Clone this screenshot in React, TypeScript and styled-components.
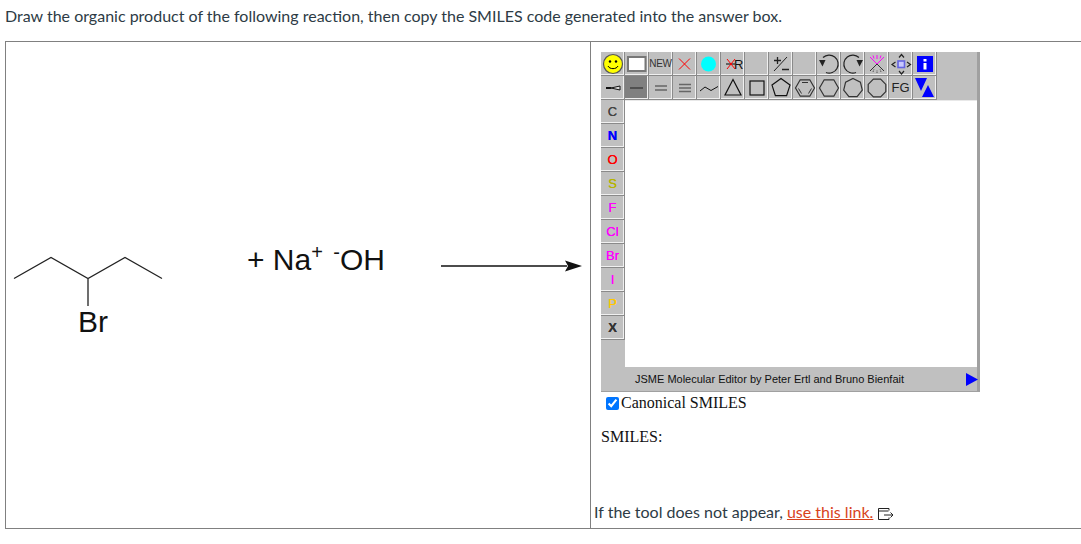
import { ReactNode } from 'react';
import styled, { createGlobalStyle } from 'styled-components';

const GlobalStyle = createGlobalStyle`
  html, body {
    margin: 0;
    padding: 0;
    background: #fff;
    overflow: hidden;
  }
  body {
    width: 1081px;
    height: 544px;
    font-family: Lato, "Liberation Sans", sans-serif;
  }
`;

const Page = styled.div`
  padding: 6px 0 0 5px;
`;

const Prompt = styled.p`
  margin: 0;
  height: 35px;
  font-size: 16px;
  line-height: 20px;
  color: #2d3b45;
`;

const QuestionTable = styled.div`
  display: grid;
  grid-template-columns: 585px 1fr;
  height: 486px;
  border: 1px solid #808080;
  border-right: none;
`;

const ReactionCell = styled.div`
  display: flex;
  align-items: flex-start;
  border-right: 1px solid #808080;
  font-family: "Liberation Sans", Arial, sans-serif;
  color: #111;
`;

const Molecule = styled.svg`
  flex: none;
  width: 170px;
  height: 110px;
  margin: 212px 0 0 0;
`;

const Reagents = styled.div`
  flex: none;
  width: 137px;
  margin: 198px 0 0 71px;
  font-size: 30px;
  line-height: 40px;
  white-space: nowrap;
  sup {
    font-size: 20px;
    line-height: 0;
    vertical-align: 11px;
  }
  sup + sup {
    margin-left: 2px;
  }
`;

const ReactionArrow = styled.svg`
  flex: none;
  width: 142px;
  height: 12px;
  margin: 218px 0 0 57px;
`;

const ToolCell = styled.div`
  display: flex;
  flex-direction: column;
  padding: 10px 0 0 10px;
  min-width: 0;
`;

const Editor = styled.div`
  display: grid;
  grid-template-columns: 24px 352px;
  grid-template-rows: 48px 267px 24px;
  width: 376px;
  background: #c0c0c0;
  border-right: 3px solid #a0a0a0;
  border-bottom: 1px solid #a0a0a0;
  font-family: "Liberation Sans", Arial, sans-serif;
`;

const TopBar = styled.div`
  grid-column: 1 / 3;
  display: grid;
  grid-template-columns: repeat(14, 24px);
  grid-auto-rows: 24px;
`;

const SideBar = styled.div`
  display: grid;
  grid-auto-rows: 24px;
  align-content: start;
`;

const Canvas = styled.div`
  background: #fff;
  border-top: 1px solid #e8e8e8;
`;

const ToolButton = styled.div<{ $active?: boolean }>`
  display: flex;
  align-items: center;
  justify-content: center;
  box-sizing: border-box;
  background: ${p => (p.$active ? '#808080' : '#c0c0c0')};
  border-right: 1px solid #8a8a8a;
  border-bottom: 1px solid #8a8a8a;
  box-shadow: inset -1px -1px 0 #f0f0f0;
  svg {
    width: 24px;
    height: 24px;
    flex: none;
  }
`;

const AtomLabel = styled.span<{ $color: string; $bold?: boolean }>`
  color: ${p => p.$color};
  font-size: 13px;
  font-weight: ${p => (p.$bold ? 700 : 400)};
  text-shadow: 0 0 0.5px ${p => p.$color};
`;

const NewLabel = styled.span`
  font-size: 10px;
  letter-spacing: -0.2px;
  color: #333;
`;

const FgLabel = styled.span`
  font-size: 13px;
  color: #222;
`;

const StatusBar = styled.div`
  grid-column: 1 / 3;
  display: flex;
  align-items: center;
  justify-content: space-between;
  padding: 0 0 0 34px;
  font-size: 11px;
  color: #111;
  svg {
    margin-right: -1px;
  }
`;

const CanonicalRow = styled.label`
  display: flex;
  align-items: center;
  height: 20px;
  margin: 1px 0 0 5px;
  font-family: "Liberation Serif", "Times New Roman", serif;
  font-size: 16px;
  color: #111;
  input {
    width: 13px;
    height: 13px;
    margin: 0 2px 0 0;
    accent-color: #0075ff;
  }
`;

const SmilesLabel = styled.div`
  margin-top: 14px;
  font-family: "Liberation Serif", "Times New Roman", serif;
  font-size: 16px;
  line-height: 20px;
  color: #111;
`;

const ToolNote = styled.div`
  display: flex;
  align-items: center;
  gap: 4px;
  margin: auto 0 6px -7px;
  font-size: 16px;
  line-height: 20px;
  color: #2d3b45;
  a {
    color: #d8431c;
    text-decoration: underline;
  }
  svg {
    width: 17px;
    height: 14px;
    margin-top: 3px;
  }
`;

const Ic = ({ children }: { children: ReactNode }) => (
  <svg viewBox="0 0 24 24" fill="none" stroke="#222" strokeWidth="1">
    {children}
  </svg>
);

const ring = (sides: number, r: number, start = -90) =>
  Array.from({ length: sides }, (_, i) => {
    const a = ((start + (360 / sides) * i) * Math.PI) / 180;
    return `${(12 + r * Math.cos(a)).toFixed(1)},${(12 + r * Math.sin(a)).toFixed(1)}`;
  }).join(' ');

const firstRow: { key: string; icon?: ReactNode }[] = [
  {
    key: 'smile',
    icon: (
      <Ic>
        <circle cx="12" cy="12" r="9.500" fill="#ffff00" stroke="#555" strokeWidth="1.200" />
        <circle cx="9" cy="9.500" r="1.200" fill="#000" stroke="none" />
        <circle cx="15" cy="9.500" r="1.200" fill="#000" stroke="none" />
        <path d="M7 14c1.500 3.500 8.500 3.500 10 0" stroke="#000" />
      </Ic>
    ),
  },
  {
    key: 'rect',
    icon: (
      <Ic>
        <rect x="3" y="5" width="17.500" height="14" fill="#fff" stroke="#777" strokeWidth="2" />
      </Ic>
    ),
  },
  { key: 'new', icon: <NewLabel>NEW</NewLabel> },
  {
    key: 'delete',
    icon: (
      <Ic>
        <path d="M6 6.500l11 11M17 6.500l-11 11" stroke="#ff0000" />
      </Ic>
    ),
  },
  {
    key: 'cyan',
    icon: (
      <Ic>
        <circle cx="11.500" cy="12" r="7.500" fill="#00ffff" stroke="none" />
      </Ic>
    ),
  },
  {
    key: 'deleteR',
    icon: (
      <Ic>
        <path d="M5 12h9" stroke="#444" strokeWidth="1.500" />
        <path d="M6 7l8 10M14 7l-8 10" stroke="#ff0000" />
        <text x="13" y="17" fontSize="13" fill="#111" stroke="none" fontFamily="Liberation Sans">
          R
        </text>
      </Ic>
    ),
  },
  { key: 'blank1' },
  {
    key: 'charge',
    icon: (
      <Ic>
        <path d="M5 19L18 5" />
        <path d="M5 8.500h7M8.500 5v7M13 17.500h7" strokeWidth="1.300" />
      </Ic>
    ),
  },
  { key: 'blank2' },
  {
    key: 'undo',
    icon: (
      <Ic>
        <path d="M6 5.500A9 9 0 1 1 9 20.500" strokeWidth="1.200" />
        <path d="M2 8h6.500l-3 6.500z" fill="#222" stroke="none" />
      </Ic>
    ),
  },
  {
    key: 'redo',
    icon: (
      <Ic>
        <path d="M18 5.500A9 9 0 1 0 15 20.500" strokeWidth="1.200" />
        <path d="M22 8h-6.500l3 6.500z" fill="#222" stroke="none" />
      </Ic>
    ),
  },
  {
    key: 'reaction',
    icon: (
      <Ic>
        <path d="M12 12l7 7M12 12l-7 7" stroke="#333" />
        <path d="M5 5l7 7 7-7M8 3.500l1 3M12 3v4M16 3.500l-1 3" stroke="#ff00ff" />
        <path d="M8 20l1-3M12 21v-3M16 20l-1-3" stroke="#555" strokeDasharray="1.500 1" />
      </Ic>
    ),
  },
  {
    key: 'move',
    icon: (
      <Ic>
        <rect x="9" y="9" width="6.500" height="6.500" fill="#c8c8ff" stroke="#6464e0" strokeWidth="1.600" />
        <path d="M10 5.500l2.500-3 2.500 3M10 19l2.500 3 2.500-3M6.500 10l-3.500 2.500 3.500 2.500M18 10l3.500 2.500-3.500 2.500" strokeWidth="1.200" />
      </Ic>
    ),
  },
  {
    key: 'info',
    icon: (
      <Ic>
        <rect x="4" y="4" width="16" height="16" fill="#0000ff" stroke="none" />
        <path d="M10.500 7h3v2.500h-3zM10.500 11h3v6.500h-3z" fill="#fff" stroke="none" />
      </Ic>
    ),
  },
];

const secondRow: { key: string; active?: boolean; icon: ReactNode }[] = [
  {
    key: 'wedge',
    icon: (
      <Ic>
        <path d="M5 12h5" stroke="#111" strokeWidth="2" />
        <path d="M10 12l9-2v4z" fill="#ddd" stroke="#111" />
      </Ic>
    ),
  },
  {
    key: 'single',
    active: true,
    icon: (
      <Ic>
        <path d="M5 12h13" stroke="#444" strokeWidth="1.600" />
      </Ic>
    ),
  },
  {
    key: 'double',
    icon: (
      <Ic>
        <path d="M6 10h12M6 14h12" stroke="#666" strokeWidth="1.500" />
      </Ic>
    ),
  },
  {
    key: 'triple',
    icon: (
      <Ic>
        <path d="M6 8.500h12M6 12h12M6 15.500h12" stroke="#666" strokeWidth="1.500" />
      </Ic>
    ),
  },
  {
    key: 'chain',
    icon: (
      <Ic>
        <path d="M3 15l5-4 6 3.500 7-4" stroke="#111" />
      </Ic>
    ),
  },
  {
    key: 'triangle',
    icon: (
      <Ic>
        <path d="M12 3.500l8 15.500H4z" stroke="#111" strokeWidth="1.200" />
      </Ic>
    ),
  },
  {
    key: 'square',
    icon: (
      <Ic>
        <rect x="5" y="5" width="14" height="14" stroke="#111" strokeWidth="1.200" />
      </Ic>
    ),
  },
  {
    key: 'pentagon',
    icon: (
      <Ic>
        <polygon points={ring(5, 9.500)} stroke="#111" strokeWidth="1.200" />
      </Ic>
    ),
  },
  {
    key: 'benzene',
    icon: (
      <Ic>
        <polygon points={ring(6, 9.500, 0)} stroke="#333" strokeWidth="1.200" />
        <path d="M9 6.500h6M5.500 12.500l3 5M18.500 12.500l-3 5" stroke="#333" />
      </Ic>
    ),
  },
  {
    key: 'hexagon',
    icon: (
      <Ic>
        <polygon points={ring(6, 9.500, 0)} stroke="#333" strokeWidth="1.200" />
      </Ic>
    ),
  },
  {
    key: 'heptagon',
    icon: (
      <Ic>
        <polygon points={ring(7, 9.500)} stroke="#333" strokeWidth="1.200" />
      </Ic>
    ),
  },
  {
    key: 'octagon',
    icon: (
      <Ic>
        <polygon points={ring(8, 9.500, 22.500)} stroke="#333" strokeWidth="1.200" />
      </Ic>
    ),
  },
  { key: 'fg', icon: <FgLabel>FG</FgLabel> },
  {
    key: 'more',
    icon: (
      <Ic>
        <path d="M2 2h12L8 15zM15 9l6 12H9z" fill="#0000ff" stroke="none" />
      </Ic>
    ),
  },
];

const atoms = [
  { label: 'C', color: '#444444' },
  { label: 'N', color: '#0000ff', bold: true },
  { label: 'O', color: '#ff0000' },
  { label: 'S', color: '#b4b400' },
  { label: 'F', color: '#ff00ff' },
  { label: 'Cl', color: '#ff00ff' },
  { label: 'Br', color: '#ff00ff' },
  { label: 'I', color: '#ff00ff' },
  { label: 'P', color: '#ffc800' },
  { label: 'X', color: '#333333', bold: true },
];

export default function App() {
  return (
    <Page>
      <GlobalStyle />
      <Prompt>Draw the organic product of the following reaction, then copy the SMILES code generated into the answer box.</Prompt>
      <QuestionTable>
        <ReactionCell>
          <Molecule viewBox="0 0 170 110">
            <path d="M8 24.500L45 3.500 82 24.500 119 3.500 156 24.500M82 24.500V52" fill="none" stroke="#222" strokeWidth="1.300" />
            <text x="72" y="78" fontSize="30" fontFamily="Liberation Sans" fill="#111">
              Br
            </text>
          </Molecule>
          <Reagents>
            + Na<sup>+</sup> <sup>-</sup>OH
          </Reagents>
          <ReactionArrow viewBox="0 0 142 12">
            <path d="M0 6h126" stroke="#111" strokeWidth="1.500" />
            <path d="M124 .5l17 5.500-17 5.500 3-5.500z" fill="#111" />
          </ReactionArrow>
        </ReactionCell>
        <ToolCell>
          <Editor>
            <TopBar>
              {firstRow.map(t => (
                <ToolButton key={t.key}>{t.icon}</ToolButton>
              ))}
              {secondRow.map(t => (
                <ToolButton key={t.key} $active={t.active}>
                  {t.icon}
                </ToolButton>
              ))}
            </TopBar>
            <SideBar>
              {atoms.map(a => (
                <ToolButton key={a.label}>
                  <AtomLabel $color={a.color} $bold={a.bold}>
                    {a.label}
                  </AtomLabel>
                </ToolButton>
              ))}
            </SideBar>
            <Canvas />
            <StatusBar>
              JSME Molecular Editor by Peter Ertl and Bruno Bienfait
              <svg width="12" height="13" viewBox="0 0 12 13">
                <path d="M0 0l12 6.500L0 13z" fill="#0000ff" />
              </svg>
            </StatusBar>
          </Editor>
          <CanonicalRow>
            <input type="checkbox" defaultChecked />
            Canonical SMILES
          </CanonicalRow>
          <SmilesLabel>SMILES:</SmilesLabel>
          <ToolNote>
            <span>
              If the tool does not appear, <a href="#jsme">use this link.</a>
            </span>
            <svg viewBox="0 0 17 14" fill="none" stroke="#222" strokeWidth="1">
              <path d="M12 3.500V1.500H1.500v11H12v-2" />
              <path d="M1.500 4h10M7 8h9M13.500 5.500L16 8l-2.500 2.500" />
            </svg>
          </ToolNote>
        </ToolCell>
      </QuestionTable>
    </Page>
  );
}
